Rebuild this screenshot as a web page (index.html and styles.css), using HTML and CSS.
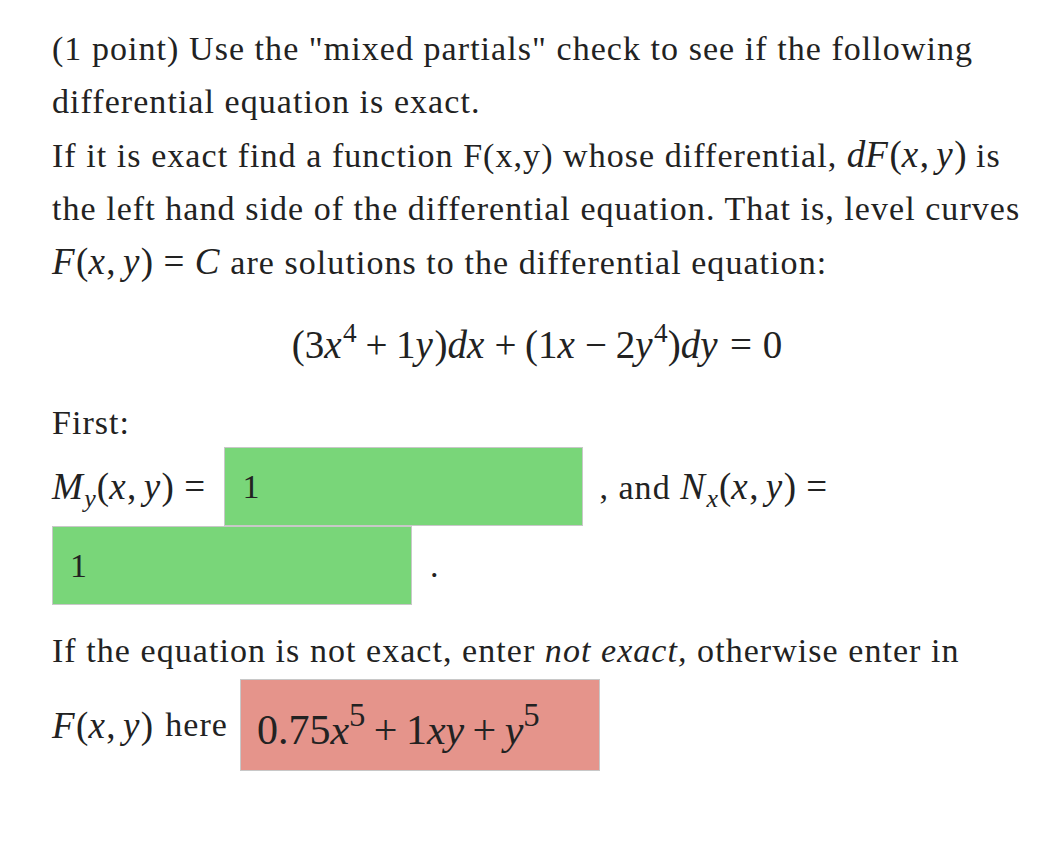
FILE: index.html
```html
<!DOCTYPE html>
<html>
<head>
<meta charset="utf-8">
<link rel="stylesheet" href="styles.css">
</head>
<body>
<div class="problem">
  <p class="intro">(1 point) Use the "mixed partials" check to see if the following<br>differential equation is exact.<br>If it is exact find a function F(x,y) whose differential, <span class="m"><i>dF</i>(<i>x</i>,<span class="sp"></span><i>y</i>)</span> is<br>the left hand side of the differential equation. That is, level curves<br><span class="m"><i>F</i>(<i>x</i>,<span class="sp"></span><i>y</i>)<span class="rel">=</span><i>C</i></span> are solutions to the differential equation:</p>
  <div class="display m">(3<i>x</i><sup>4</sup><span class="op">+</span>1<i>y</i>)<i>dx</i><span class="op">+</span>(1<i>x</i><span class="op">−</span>2<i>y</i><sup>4</sup>)<i>dy</i><span class="rel">=</span>0</div>
  <p class="first">First:</p>
  <div class="row">
    <span class="m lab"><i>M</i><sub><i>y</i></sub>(<i>x</i>,<span class="sp"></span><i>y</i>)<span class="rel">=</span></span>
    <span class="box green wide">1</span>
    <span class="after">, and <span class="m"><i>N</i><sub><i>x</i></sub>(<i>x</i>,<span class="sp"></span><i>y</i>)<span class="rel">=</span></span></span>
  </div>
  <div class="row row2">
    <span class="box green wide2">1</span>
    <span class="dot">.</span>
  </div>
  <p class="notexact">If the equation is not exact, enter <i>not exact,</i> otherwise enter in</p>
  <div class="row row3">
    <span class="m"><i>F</i>(<i>x</i>,<span class="sp"></span><i>y</i>)</span><span class="here">here</span>
    <span class="box red"><span class="ans">0.75<i>x</i><sup>5</sup><span class="aop">+</span>1<i>xy</i><span class="aop">+</span><i>y</i><sup>5</sup></span></span>
  </div>
</div>
</body>
</html>
```
FILE: styles.css
```css
html, body {
  margin: 0;
  padding: 0;
  background: #ffffff;
}
body {
  font-family: "Liberation Serif", serif;
  color: #222222;
}
.problem {
  padding: 22px 0 0 52px;
  width: 990px;
  font-size: 34px;
  letter-spacing: 1.05px;
}
.intro {
  margin: 0;
  line-height: 53px;
  white-space: nowrap;
}
.m {
  font-family: "Liberation Serif", serif;
  letter-spacing: 0;
  font-size: 37px;
}
.m i {
  font-style: italic;
  margin-right: 0.04em;
}
.sp {
  display: inline-block;
  width: 0.2em;
}
.op {
  margin: 0 0.222em;
}
.rel {
  margin: 0 0.278em;
}
sup {
  font-size: 0.7em;
  vertical-align: 0.6em;
  line-height: 0;
}
sub {
  font-size: 0.7em;
  vertical-align: -0.3em;
  line-height: 0;
}
.display {
  text-align: center;
  padding: 28px 0 0 0;
  height: 56px;
  line-height: 56px;
  font-size: 39px;
  margin-right: 20px;
}
.first {
  margin: 30px 0 0 0;
  line-height: 40px;
}
.row {
  display: flex;
  align-items: center;
  margin-top: 4px;
  height: 79px;
}
.lab {
  margin-right: 9px;
}
.box {
  display: flex;
  align-items: center;
  box-sizing: border-box;
  border: 1px solid #c8c8c8;
  padding-left: 17px;
}
.green {
  background: #79d679;
  height: 79px;
}
.wide {
  width: 359px;
}
.after {
  margin-left: 16px;
}
.row2 {
  margin-top: 0;
  height: 79px;
}
.wide2 {
  width: 360px;
}
.dot {
  margin-left: 18px;
}
.notexact {
  margin: 26px 0 0 0;
  line-height: 40px;
}
.row3 {
  margin-top: 8px;
  height: 92px;
}
.here {
  margin-left: 12px;
  margin-right: 12px;
}
.red {
  background: #e5948b;
  width: 360px;
  height: 92px;
  padding-left: 16px;
  padding-top: 10px;
}
.ans {
  font-family: "Liberation Serif", serif;
  font-size: 42px;
  letter-spacing: 0;
}
.ans i {
  font-style: italic;
}
.ans sup {
  font-size: 0.78em;
  vertical-align: 0.55em;
}
.aop {
  margin: 0 0.2em;
}
```
